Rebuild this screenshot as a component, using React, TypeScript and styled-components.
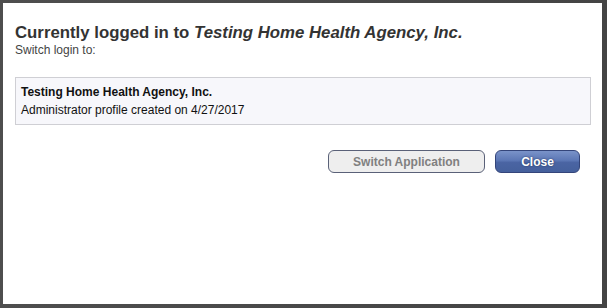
import React from 'react'
import styled, { createGlobalStyle } from 'styled-components'

const GlobalStyle = createGlobalStyle`
  html, body {
    margin: 0;
    padding: 0;
    background: #4b4b4b;
  }
  body {
    font-family: Arial, "Liberation Sans", Helvetica, sans-serif;
  }
`

const StyledFrame = styled.div`
  width: 607px;
  height: 308px;
  box-sizing: border-box;
  padding: 3px 5px 4px 3px;
  background: linear-gradient(to right, #4e4e4e, #444);
`
const StyledDialog = styled.div`
  height: 100%;
  box-sizing: border-box;
  background: #fff;
  padding: 19px 11px 0 12px;
  display: flex;
  flex-direction: column;
`
const StyledTitle = styled.h1`
  margin: 0;
  font-size: 16.8px;
  line-height: 21px;
  font-weight: bold;
  color: #333;
  em {
    font-style: italic;
  }
`
const StyledSub = styled.div`
  font-size: 12px;
  line-height: 14px;
  color: #444;
`
const StyledAccount = styled.div`
  margin-top: 20px;
  border: 1px solid #cfcfd4;
  background: #f7f7fb;
  padding: 5px 5px;
  font-size: 12px;
  line-height: 18px;
  color: #111;
`
const StyledName = styled.div`
  font-weight: bold;
`
const StyledActions = styled.div`
  display: flex;
  justify-content: flex-end;
  gap: 10px;
  margin-top: 25px;
  padding-right: 11px;
`
const StyledButton = styled.button<{ $primary?: boolean }>`
  height: 23px;
  box-sizing: border-box;
  border-radius: 6px;
  font-family: Arial, "Liberation Sans", sans-serif;
  font-size: 12px;
  font-weight: bold;
  padding: 0;
  width: ${p => (p.$primary ? '85px' : '157px')};
  border: 1px solid ${p => (p.$primary ? '#34457a' : '#5a6178')};
  color: ${p => (p.$primary ? '#fff' : '#808080')};
  background: ${p => (p.$primary
    ? 'linear-gradient(to bottom, #7a93c9 0%, #5c77b5 45%, #4a64a3 55%, #45609c 100%)'
    : '#eeeeee')};
  text-shadow: ${p => (p.$primary ? '0 0 2px #22325c' : 'none')};
  cursor: pointer;
`

export default function App() {
  return (
    <>
      <GlobalStyle />
      <StyledFrame>
        <StyledDialog>
          <StyledTitle>
            Currently logged in to <em>Testing Home Health Agency, Inc.</em>
          </StyledTitle>
          <StyledSub>Switch login to:</StyledSub>
          <StyledAccount>
            <StyledName>Testing Home Health Agency, Inc.</StyledName>
            <div>Administrator profile created on 4/27/2017</div>
          </StyledAccount>
          <StyledActions>
            <StyledButton>Switch Application</StyledButton>
            <StyledButton $primary>Close</StyledButton>
          </StyledActions>
        </StyledDialog>
      </StyledFrame>
    </>
  )
}
